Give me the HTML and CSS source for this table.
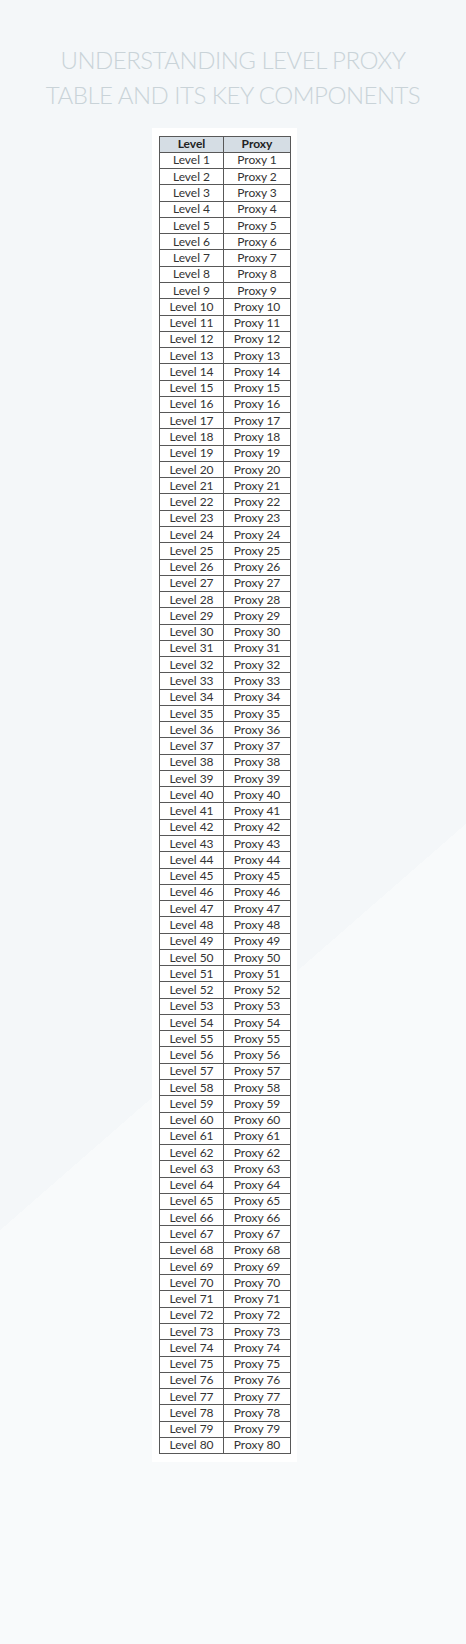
FILE: index.html
```html
<!DOCTYPE html>
<html>
<head>
<meta charset="utf-8">
<link rel="stylesheet" href="styles.css">
</head>
<body>
<div class="page">
  <h1 class="title">UNDERSTANDING LEVEL PROXY<br>TABLE AND ITS KEY COMPONENTS</h1>
  <div class="card">
    <table class="grid" id="grid">
      <colgroup><col class="c1"><col class="c2"></colgroup>
      <thead><tr><th>Level</th><th>Proxy</th></tr></thead>
      <tbody id="rows"></tbody>
    </table>
  </div>
</div>
<script src="app.js"></script>
</body>
</html>
```

FILE: app.js
```js
var tb = document.getElementById('rows');
var html = '';
for (var i = 1; i <= 80; i++) {
  html += '<tr><td>Level ' + i + '</td><td>Proxy ' + i + '</td></tr>';
}
tb.innerHTML = html;
```

FILE: styles.css
```css
html, body { margin: 0; padding: 0; }
body { font-family: Lato, "Noto Sans", sans-serif; }
.page {
  height: 1644px;
  background: linear-gradient(138.9deg, #f4f7f9 60%, #f8fafb 60%);
  display: flex;
  flex-direction: column;
  align-items: center;
  overflow: hidden;
}
.title {
  margin: 42px 0 0 0;
  font-family: Lato, sans-serif;
  font-weight: 300;
  font-size: 24px;
  line-height: 35.3px;
  color: #c9d3d8;
  text-align: center;
  letter-spacing: -0.5px;
}
.card {
  margin-top: 15px;
  margin-left: -17px;
  background: #ffffff;
  padding: 8px 6px 8px 7px;
}
.grid {
  border-collapse: collapse;
  table-layout: fixed;
  width: 131px;
  font-family: Lato, sans-serif;
  font-size: 12px;
  color: #333333;
}
.grid .c1 { width: 64px; }
.grid .c2 { width: 67px; }
.grid tr { height: 16.28px; }
.grid th, .grid td {
  border: 1px solid #585858;
  padding: 0;
  line-height: 14px;
  text-align: center;
  white-space: nowrap;
}
.grid th {
  background: #d5dde4;
  font-weight: 700;
  color: #222;
}
```
